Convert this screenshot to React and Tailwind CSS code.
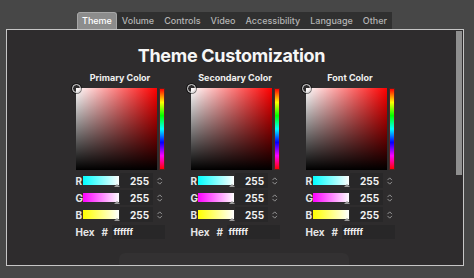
import { ChevronsUpDown } from 'lucide-react'

const tabs = ['Theme', 'Volume', 'Controls', 'Video', 'Accessibility', 'Language', 'Other']

const channels = [
  { label: 'R', bar: 'bg-[linear-gradient(to_right,#00ffff,#ffffff)]' },
  { label: 'G', bar: 'bg-[linear-gradient(to_right,#ff00ff,#ffffff)]' },
  { label: 'B', bar: 'bg-[linear-gradient(to_right,#ffff00,#ffffff)]' },
]

function ChannelRow({ label, bar }) {
  return (
    <div className="flex items-center h-[17px]">
      <span className="w-[8px] text-[10px] font-bold text-[#e6e6e6] leading-none">{label}</span>
      <div className={`relative w-[38px] h-[9px] ${bar}`}>
        {/* slider handle */}
        <span className="absolute -right-[1px] -bottom-[2px] w-0 h-0 border-l-[3px] border-r-[3px] border-b-[3px] border-l-transparent border-r-transparent border-b-[#9a9a9a]" />
      </div>
      <div className="ml-[1px] w-[35px] h-[15px] bg-[#282728] flex items-center justify-end pr-[4px] text-[10px] font-bold text-[#f2f2f2] leading-none">
        255
      </div>
      <ChevronsUpDown size={10} strokeWidth={2} className="ml-[2px] text-[#b0b0b0]" />
    </div>
  )
}

function ColorColumn({ title }) {
  return (
    <div className="flex flex-col items-stretch w-[89px]">
      <p className="text-center text-[9px] font-bold text-[#f0f0f0] leading-[12px] whitespace-nowrap">{title}</p>
      <div className="flex gap-[2px] mt-[4px] h-[82px]">
        <div className="relative w-[82px] h-[82px] bg-[#ff0000]">
          <div className="absolute inset-0 bg-[linear-gradient(to_right,#ffffff,rgba(255,255,255,0))]" />
          <div className="absolute inset-0 bg-[linear-gradient(to_bottom,rgba(0,0,0,0),#000000)]" />
          {/* picker cursor */}
          <span className="absolute -left-[4px] -top-[4px] w-[9px] h-[9px] rounded-full border-[1.5px] border-[#d8d8d8] shadow-[0_0_0_1px_rgba(0,0,0,0.5)]" />
        </div>
        <div className="w-[6px] h-[82px] border-[0.5px] border-[#5a2020] bg-[linear-gradient(to_bottom,#ff0000,#ffff00,#00ff00,#00ffff,#0000ff,#ff00ff,#ff0000)]" />
      </div>
      <div className="mt-[2px] flex flex-col">
        {channels.map((c) => (
          <ChannelRow key={c.label} {...c} />
        ))}
        <div className="flex items-center h-[17px]">
          <span className="w-[26px] text-[10px] font-bold text-[#e6e6e6] leading-none">Hex</span>
          <span className="w-[10px] text-[10px] font-bold text-[#e6e6e6] leading-none">#</span>
          <div className="w-[53px] h-[14px] bg-[#282728] flex items-center pl-[2px] text-[9px] font-bold text-[#f2f2f2] leading-none">
            ffffff
          </div>
        </div>
      </div>
    </div>
  )
}

export default function App() {
  return (
    <div className="w-[474px] h-[278px] bg-[#474747] overflow-hidden font-['Inter',sans-serif] pt-[12px]">
      {/* Tabs */}
      <div className="ml-[77px] flex w-fit bg-[#303030] h-[17px] items-stretch">
        {tabs.map((t, i) => (
          <div
            key={t}
            className={
              i === 0
                ? 'px-[4px] flex items-center text-[9px] font-medium text-white bg-[#8c8c8c] rounded-t-[3px] border border-b-0 border-[#a6a6a6]'
                : 'px-[5px] flex items-center text-[9px] font-medium text-[#b4b4b4]'
            }
          >
            {t}
          </div>
        ))}
      </div>

      {/* Panel */}
      <div className="ml-[6px] w-[458px] h-[237px] border border-[#c6c6c6] bg-[#2e2c2d] flex overflow-hidden">
        <div className="flex-1 flex flex-col items-center overflow-hidden">
          <h1 className="mt-[15px] text-[18px] font-bold text-[#f6f6f6] leading-[22px] tracking-[-0.3px]">Theme Customization</h1>
          <div className="mt-[5px] ml-[7px] flex gap-[26px]">
            <ColorColumn title="Primary Color" />
            <ColorColumn title="Secondary Color" />
            <ColorColumn title="Font Color" />
          </div>
          <div className="mt-[13px] ml-[4px] w-[230px] h-[30px] rounded-[6px] bg-[#333132] flex justify-center pt-[9px] text-[10px] font-bold text-[#8a8a8a]">
            Apply Theme
          </div>
        </div>
        {/* scrollbar */}
        <div className="w-[7px] pr-[1px] pt-[1px]">
          <div className="h-[144px] bg-[#8f8f8f]" />
        </div>
      </div>
    </div>
  )
}
